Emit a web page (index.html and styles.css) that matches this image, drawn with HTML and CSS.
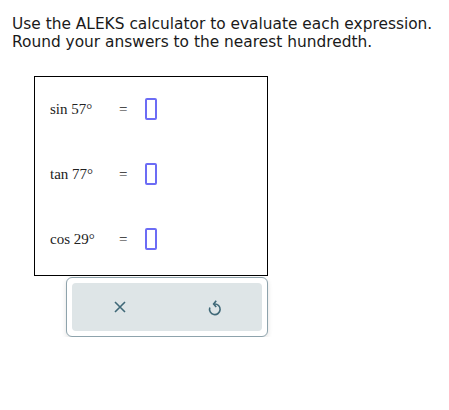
FILE: index.html
```html
<!DOCTYPE html>
<html>
<head>
<meta charset="utf-8">
<link rel="stylesheet" href="styles.css">
</head>
<body>
<div class="intro">
  <p>Use the ALEKS calculator to evaluate each expression.</p>
  <p>Round your answers to the nearest hundredth.</p>
</div>
<div class="box">
  <div class="row"><span class="label">sin 57°</span><span class="eq">=</span><span class="input"></span></div>
  <div class="row"><span class="label">tan 77°</span><span class="eq">=</span><span class="input"></span></div>
  <div class="row"><span class="label">cos 29°</span><span class="eq">=</span><span class="input"></span></div>
</div>
<div class="panel">
  <div class="inner">
    <button class="btn" aria-label="clear">
      <svg width="12" height="12" viewBox="0 0 12 12"><path d="M1 1 L11 11 M11 1 L1 11" stroke="#3f6877" stroke-width="1.6" fill="none"/></svg>
    </button>
    <button class="btn" aria-label="undo">
      <svg width="14" height="17" viewBox="0 0 14 17"><path d="M6.5 5 A5.3 5.3 0 1 1 1.8 8.6" stroke="#3f6877" stroke-width="1.6" fill="none"/><path d="M8.2 1.8 L5.6 5 L8.2 8" stroke="#3f6877" stroke-width="1.6" fill="none"/></svg>
    </button>
  </div>
</div>
</body>
</html>
```
FILE: styles.css
```css
html, body { margin: 0; padding: 0; background: #fff; }
body { font-family: "DejaVu Sans", Verdana, sans-serif; }
.intro { padding: 15px 0 0 12px; color: #1a1a1a; font-size: 15.4px; line-height: 18px; }
.intro p { margin: 0; }
.box {
  margin: 25px 0 0 34px;
  width: 232px;
  height: 177px;
  border: 1px solid #000;
  padding-top: 21px;
  display: flex;
  flex-direction: column;
  gap: 43px;
}
.row { display: flex; align-items: center; height: 22px; padding-left: 15px; font-family: "Liberation Serif", "Times New Roman", serif; font-size: 15px; color: #222; }
.label { width: 69px; }
.eq { width: 26px; font-size: 15px; }
.input { width: 8px; height: 18px; border: 2px solid #6c6cf5; border-radius: 2px; }
.panel {
  margin: 1px 0 0 66px;
  width: 190px;
  padding: 5px;
  border: 1px solid #8ea3ac;
  border-radius: 6px;
  background: #fff;
  box-shadow: 0 2px 5px rgba(0,0,0,0.12);
}
.inner { display: flex; height: 48px; background: #dee5e7; border-radius: 4px; }
.btn { flex: 1; border: 0; background: transparent; padding: 0; display: flex; align-items: center; justify-content: center; }
.btn svg { display: block; }
```
